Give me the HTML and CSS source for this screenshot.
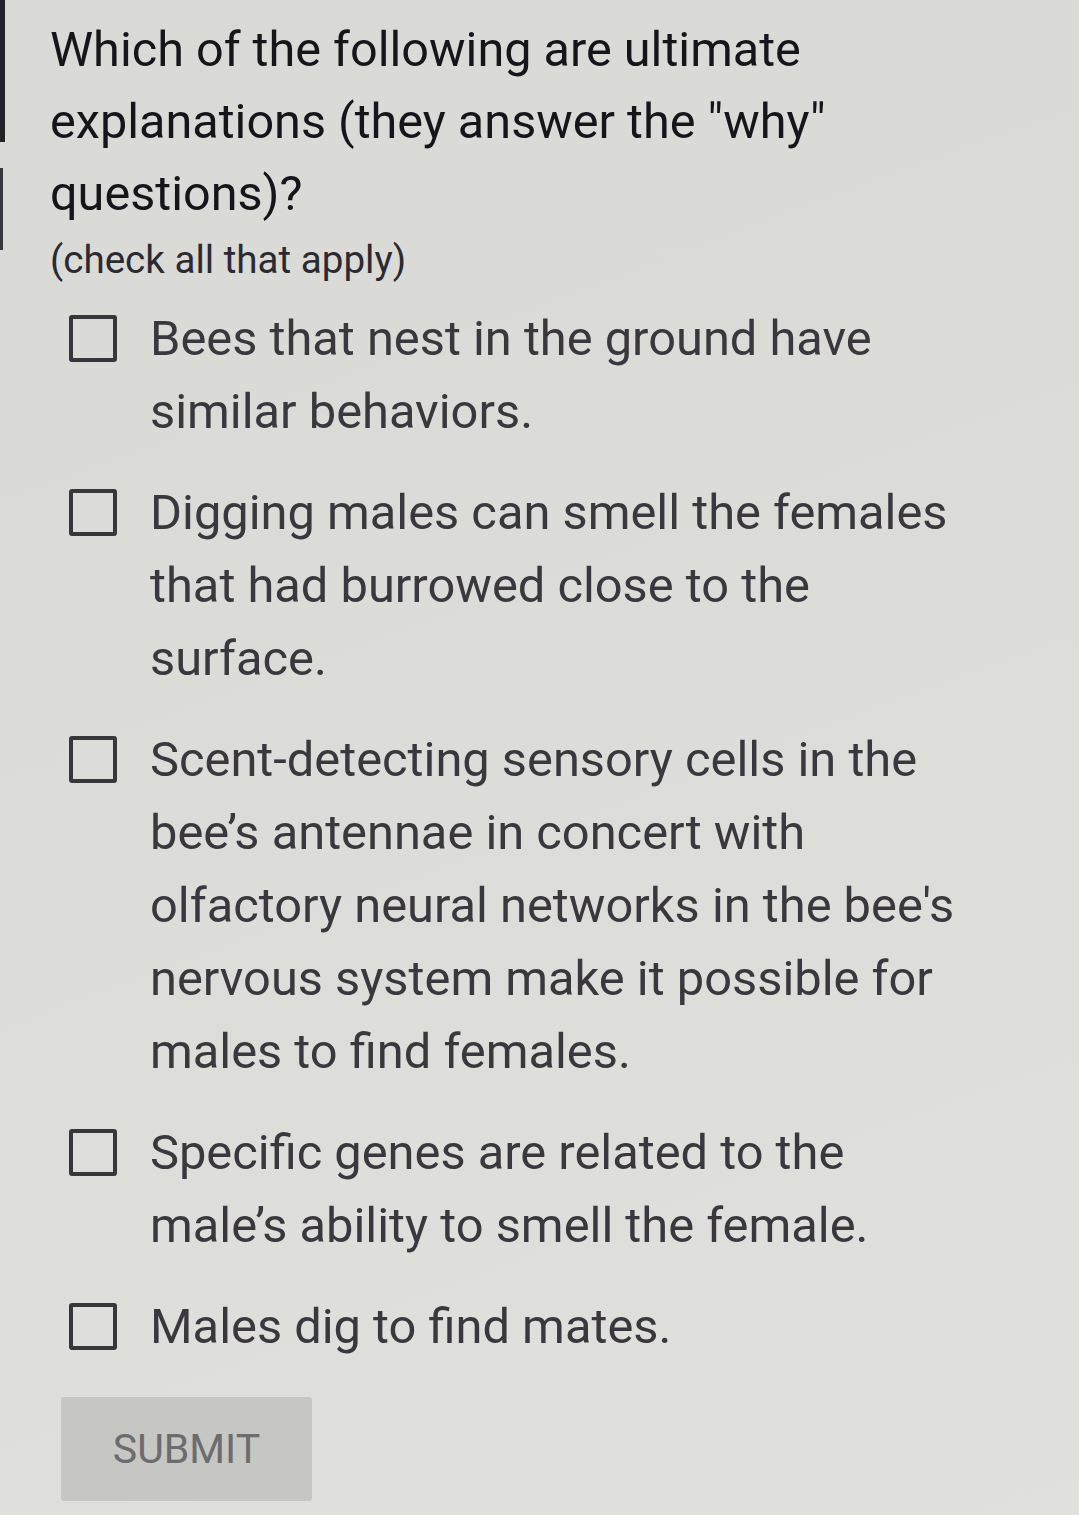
FILE: index.html
```html
<!DOCTYPE html>
<html lang="en">
<head>
<meta charset="utf-8">
<title>Question</title>
<link rel="stylesheet" href="styles.css">
</head>
<body>
<div class="edge"><span class="edge-a"></span><span class="edge-b"></span></div>
<main class="page">
  <h1 class="question">Which of the following are ultimate explanations (they answer the "why" questions)?</h1>
  <p class="hint">(check all that apply)</p>
  <ul class="options">
    <li class="option"><span class="box"></span><span class="label">Bees that nest in the ground have similar behaviors.</span></li>
    <li class="option"><span class="box"></span><span class="label">Digging males can smell the females that had burrowed close to the surface.</span></li>
    <li class="option"><span class="box"></span><span class="label">Scent-detecting sensory cells in the bee’s antennae in concert with olfactory neural networks in the bee's nervous system make it possible for males to find females.</span></li>
    <li class="option"><span class="box"></span><span class="label">Specific genes are related to the male’s ability to smell the female.</span></li>
    <li class="option"><span class="box"></span><span class="label">Males dig to find mates.</span></li>
  </ul>
  <button class="submit" type="button">SUBMIT</button>
</main>
</body>
</html>
```
FILE: styles.css
```css
html, body {
  margin: 0;
  padding: 0;
}
body {
  width: 1079px;
  height: 1515px;
  overflow: hidden;
  background: linear-gradient(160deg, #d9d9d5 0%, #dcdcd8 50%, #e0e0dc 100%);
  font-family: Roboto, "Liberation Sans", Arial, sans-serif;
  position: relative;
}
.edge {
  position: absolute;
  left: 0;
  top: 0;
  width: 6px;
  height: 260px;
}
.edge-a {
  position: absolute;
  left: 0;
  top: 0;
  width: 5px;
  height: 142px;
  background: #232226;
}
.edge-b {
  position: absolute;
  left: 0;
  top: 168px;
  width: 3px;
  height: 82px;
  background: #38373b;
}
.page {
  padding: 14px 0 0 50px;
}
.question {
  margin: 0;
  width: 820px;
  font-size: 48.6px;
  font-weight: 400;
  line-height: 72px;
  color: #17151c;
}
.hint {
  margin: 0;
  font-size: 38.6px;
  line-height: 60px;
  color: #2c2a30;
}
.options {
  list-style: none;
  margin: 12px 0 0 0;
  padding: 0;
  display: flex;
  flex-direction: column;
  gap: 28px;
}
.option {
  display: flex;
  align-items: flex-start;
  padding-left: 19px;
}
.box {
  flex: none;
  width: 48px;
  height: 47px;
  box-sizing: border-box;
  border: 4px solid #38363b;
  border-radius: 3px;
  margin-top: 13px;
  margin-right: 33px;
}
.label {
  width: 826px;
  font-size: 48.8px;
  line-height: 73px;
  color: #3a383e;
}
.submit {
  margin-top: 34px;
  margin-left: 11px;
  width: 251px;
  height: 104px;
  border: none;
  border-radius: 3px;
  background: #c6c6c2;
  color: #6c6b6e;
  font-family: Roboto, "Liberation Sans", Arial, sans-serif;
  font-size: 41px;
  padding: 0;
}
```
